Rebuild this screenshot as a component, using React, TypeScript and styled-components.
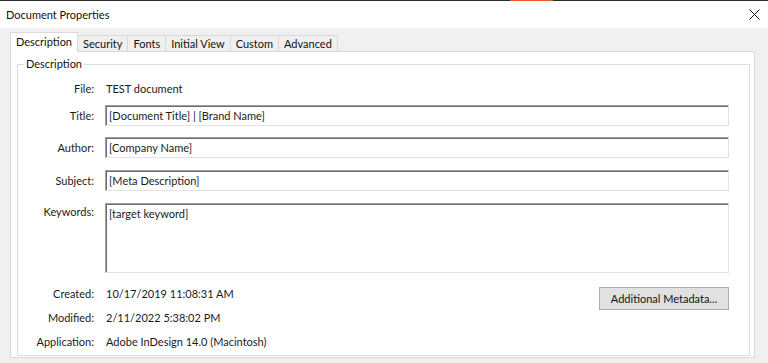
import styled, { createGlobalStyle } from "styled-components";

const GlobalStyle = createGlobalStyle`
html, body {
    margin: 0;
    padding: 0;
    background: #f0f0f0;
}
body {
    font-family: Lato, "Liberation Sans", sans-serif;
    font-size: 11px;
    color: #1b1b1b;
}
`

const Window = styled.div`
width: 768px;
height: 363px;
display: flex;
flex-direction: column;
overflow: hidden;
background: #f0f0f0;
`

const TopEdge = styled.div`
height: 1px;
background: #2f2f2f;
display: flex;
flex: 0 0 auto;
`

const OrangeMark = styled.span`
margin-left: 510px;
width: 43px;
background: #e2572b;
`

const TitleBar = styled.div`
height: 27px;
flex: 0 0 auto;
background: #fff;
display: flex;
align-items: center;
justify-content: space-between;
padding: 0 8px 0 6px;
`

const Title = styled.span`
font-size: 11px;
color: #111;
`

const CloseButton = styled.button`
width: 12px;
height: 12px;
padding: 0;
border: 0;
background: transparent;
display: flex;
align-items: center;
justify-content: center;
`

const Body = styled.div`
flex: 1 1 auto;
display: flex;
flex-direction: column;
padding: 4px 13px 5px 10px;
`

const TabStrip = styled.div`
display: flex;
align-items: flex-end;
height: 20px;
margin-bottom: -1px;
position: relative;
z-index: 1;
`

const Tab = styled.div<{ $active?: boolean }>`
box-sizing: border-box;
height: ${p => (p.$active ? "20px" : "16px")};
margin-bottom: ${p => (p.$active ? "0" : "1px")};
padding: ${p => (p.$active ? "0 5px 2px" : "0 5px")};
margin-left: -1px;
border: 1px solid #d9d9d9;
border-bottom: none;
background: ${p => (p.$active ? "#fff" : "#f0f0f0")};
display: flex;
align-items: center;
color: #111;
white-space: nowrap;

&:first-child {
    margin-left: 0;
}
`

const Panel = styled.div`
flex: 1 1 auto;
display: flex;
flex-direction: column;
background: #fff;
border: 1px solid #d9d9d9;
padding: 5px 4px 1px 6px;
`

const Group = styled.fieldset`
flex: 1 1 auto;
margin: 0;
padding: 0 20px 0 0;
border: 1px solid #dcdcdc;
min-width: 0;
`

const Legend = styled.legend`
margin-left: 6px;
padding: 0 2px;
line-height: 14px;
color: #111;
`

const Row = styled.div<{ $gap: number; $top?: boolean }>`
display: flex;
align-items: ${p => (p.$top ? "flex-start" : "center")};
margin-top: ${p => p.$gap}px;
min-height: 20px;
`

const Label = styled.div<{ $pad?: number }>`
flex: 0 0 76px;
margin-right: 11px;
text-align: right;
white-space: nowrap;
padding-top: ${p => p.$pad ?? 0}px;
`

const StaticValue = styled.div`
padding-left: 1px;
white-space: nowrap;
`

const boxStyles = `
box-sizing: border-box;
flex: 1 1 auto;
min-width: 0;
margin: 0;
font-family: inherit;
font-size: 11px;
color: #1b1b1b;
background: #fff;
border-style: solid;
border-width: 1px;
border-color: #a0a0a0 #e3e3e3 #e3e3e3 #a0a0a0;
box-shadow: inset 1px 1px 0 #6e6e6e;
outline: none;
padding: 0 3px;
`

const TextBox = styled.input`
${boxStyles}
height: 21px;
`

const TextArea = styled.textarea`
${boxStyles}
height: 70px;
padding-top: 3px;
resize: none;
line-height: 14px;
overflow: hidden;
`

const InfoGrid = styled.div`
display: grid;
grid-template-columns: 76px 1fr 130px;
grid-auto-rows: 24px;
column-gap: 11px;
margin-top: 8px;
align-items: center;
`

const InfoLabel = styled.div`
text-align: right;
white-space: nowrap;
`

const InfoValue = styled.div`
padding-left: 1px;
white-space: nowrap;
`

const MetaButton = styled.button`
grid-column: 3;
grid-row: 1 / span 2;
align-self: start;
margin-top: 6px;
height: 23px;
box-sizing: border-box;
background: #e1e1e1;
border: 1px solid #adadad;
font-family: inherit;
font-size: 11px;
color: #111;
padding: 0;
`

const tabs = ["Description", "Security", "Fonts", "Initial View", "Custom", "Advanced"];

const info = [
    ["Created:", "10/17/2019 11:08:31 AM"],
    ["Modified:", "2/11/2022 5:38:02 PM"],
    ["Application:", "Adobe InDesign 14.0 (Macintosh)"],
];

const App = () => {

    return (
        <Window>
            <GlobalStyle />
            <TopEdge>
                <OrangeMark />
            </TopEdge>
            <TitleBar>
                <Title>Document Properties</Title>
                <CloseButton aria-label="Close">
                    <svg width="11" height="11" viewBox="0 0 11 11">
                        <path d="M0.5 0.5 L10.5 10.5 M10.5 0.5 L0.5 10.5" stroke="#111" strokeWidth="1" fill="none" />
                    </svg>
                </CloseButton>
            </TitleBar>

            <Body>
                <TabStrip>
                    {tabs.map((t, i) => (
                        <Tab key={t} $active={i === 0}>{t}</Tab>
                    ))}
                </TabStrip>

                <Panel>
                    <Group>
                        <Legend>Description</Legend>

                        <Row $gap={7}>
                            <Label>File:</Label>
                            <StaticValue>TEST document</StaticValue>
                        </Row>
                        <Row $gap={7}>
                            <Label>Title:</Label>
                            <TextBox readOnly defaultValue="[Document Title] | [Brand Name]" />
                        </Row>
                        <Row $gap={11}>
                            <Label>Author:</Label>
                            <TextBox readOnly defaultValue="[Company Name]" />
                        </Row>
                        <Row $gap={12}>
                            <Label>Subject:</Label>
                            <TextBox readOnly defaultValue="[Meta Description]" />
                        </Row>
                        <Row $gap={12} $top>
                            <Label $pad={2}>Keywords:</Label>
                            <TextArea readOnly defaultValue="[target keyword]" />
                        </Row>

                        <InfoGrid>
                            {info.map(([k, v]) => [
                                <InfoLabel key={k}>{k}</InfoLabel>,
                                <InfoValue key={k + "v"}>{v}</InfoValue>,
                            ])}
                            <MetaButton>Additional Metadata...</MetaButton>
                        </InfoGrid>
                    </Group>
                </Panel>
            </Body>
        </Window>
    )
}

export default App;
